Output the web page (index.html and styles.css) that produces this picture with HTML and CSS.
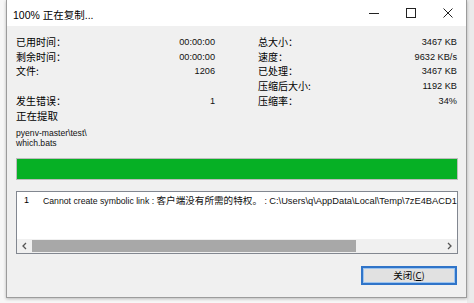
FILE: index.html
```html
<!DOCTYPE html>
<html lang="zh-CN">
<head>
<meta charset="utf-8">
<title>100% 正在复制...</title>
<link rel="stylesheet" href="styles.css">
</head>
<body>
<div class="desktop">
  <div class="window">
    <div class="titlebar">
      <span class="title">100% 正在复制...</span>
      <div class="controls">
        <span class="ctl"><svg width="12" height="12" viewBox="0 0 12 12"><path d="M1 6.5h10" stroke="#222" stroke-width="1"/></svg></span>
        <span class="ctl"><svg width="12" height="12" viewBox="0 0 12 12"><rect x="1.5" y="1.5" width="9" height="9" fill="none" stroke="#222" stroke-width="1"/></svg></span>
        <span class="ctl"><svg width="12" height="12" viewBox="0 0 12 12"><path d="M1.5 1.5l9 9M10.5 1.5l-9 9" stroke="#222" stroke-width="1"/></svg></span>
      </div>
    </div>
    <div class="body">
      <div class="stats">
        <div class="col">
          <div class="row"><span class="lbl">已用时间：</span><span class="val">00:00:00</span></div>
          <div class="row"><span class="lbl">剩余时间：</span><span class="val">00:00:00</span></div>
          <div class="row"><span class="lbl">文件:</span><span class="val">1206</span></div>
          <div class="row"></div>
          <div class="row"><span class="lbl">发生错误：</span><span class="val">1</span></div>
        </div>
        <div class="col">
          <div class="row"><span class="lbl">总大小：</span><span class="val">3467 KB</span></div>
          <div class="row"><span class="lbl">速度：</span><span class="val">9632 KB/s</span></div>
          <div class="row"><span class="lbl">已处理：</span><span class="val">3467 KB</span></div>
          <div class="row"><span class="lbl">压缩后大小:</span><span class="val">1192 KB</span></div>
          <div class="row"><span class="lbl">压缩率：</span><span class="val">34%</span></div>
        </div>
      </div>
      <div class="current">正在提取</div>
      <div class="path">pyenv-master\test\<br>which.bats</div>
      <div class="progress"><div class="fill" style="width:100%"></div></div>
      <div class="log">
        <div class="log-rows">
          <div class="log-row"><span class="num">1</span><span class="msg">Cannot create symbolic link : <span class="cjk">客户端没有所需的特权。</span> : <span class="fpath">C:\Users\q\AppData\Local\Temp\7zE4BACD1</span></span></div>
        </div>
        <div class="hscroll">
          <span class="arr"><svg width="7" height="8" viewBox="0 0 7 8"><path d="M5 1L2 4l3 3" fill="none" stroke="#555" stroke-width="1.3"/></svg></span>
          <div class="track"><div class="thumb"></div></div>
          <span class="arr"><svg width="7" height="8" viewBox="0 0 7 8"><path d="M2 1l3 3-3 3" fill="none" stroke="#555" stroke-width="1.3"/></svg></span>
        </div>
      </div>
      <div class="footer"><button class="btn">关闭(<u>C</u>)</button></div>
    </div>
  </div>
</div>
</body>
</html>
```

FILE: styles.css
```css
* { box-sizing: border-box; }
html, body {
  margin: 0;
  padding: 0;
  width: 474px;
  height: 303px;
  overflow: hidden;
  background: #f7f7f7;
  font-family: "Liberation Sans", "Noto Sans CJK SC", sans-serif;
  font-size: 9px;
  color: #000;
}
.desktop {
  position: relative;
  width: 474px;
  height: 303px;
  background: linear-gradient(to right, #f7f7f7 0, #f7f7f7 467px, #ebebeb 467px);
}
.window {
  margin-left: 6px;
  width: 461px;
  height: 298px;
  border: 1px solid #9c9c9c;
  border-top: none;
  background: #f0f0f0;
  display: flex;
  flex-direction: column;
  box-shadow: 0 1px 3px rgba(0,0,0,0.25);
}
.titlebar {
  height: 26px;
  background: #fff;
  display: flex;
  align-items: center;
  justify-content: space-between;
  padding-left: 6px;
}
.title {
  font-family: "Liberation Sans", "Noto Sans CJK SC", sans-serif;
  font-size: 10.5px;
  padding-top: 2px;
}
.controls {
  display: flex;
  height: 26px;
}
.ctl {
  width: 37px;
  display: flex;
  align-items: center;
  justify-content: center;
}
.controls .ctl:first-child { width: 36px; }
.body {
  flex: 1;
  padding: 8.5px 8px 0 9px;
  display: flex;
  flex-direction: column;
}
.stats {
  display: grid;
  grid-template-columns: 199px 199px;
  column-gap: 43px;
}
.row {
  height: 14.75px;
  display: flex;
  align-items: center;
  justify-content: space-between;
}
.lbl {
  font-family: "Noto Sans CJK SC", sans-serif;
  font-size: 10px;
  line-height: 14px;
}
.val {
  font-size: 9.2px;
  color: #111;
}
.current {
  margin-top: 1px;
  font-family: "Noto Sans CJK SC", sans-serif;
  font-size: 10.5px;
  line-height: 14px;
}
.path {
  margin-top: 4.5px;
  font-size: 8.6px;
  line-height: 10.5px;
  color: #111;
}
.progress {
  margin-top: 9px;
  height: 22px;
  width: 442px;
  border: 1px solid #bcbcbc;
  background: #e6e6e6;
}
.fill {
  height: 100%;
  background: #06b025;
}
.log {
  margin-top: 11px;
  width: 442px;
  height: 63px;
  border: 1px solid #828790;
  background: #fff;
  display: flex;
  flex-direction: column;
  overflow: hidden;
}
.log-rows {
  flex: 1;
  overflow: hidden;
}
.log-row {
  display: flex;
  white-space: nowrap;
  height: 15px;
  align-items: center;
  margin-top: 1px;
}
.num {
  width: 26px;
  padding-left: 7px;
  flex: none;
  font-size: 9px;
}
.msg {
  font-size: 8.7px;
  color: #111;
}
.cjk {
  font-family: "Noto Sans CJK SC", sans-serif;
  font-size: 9.6px;
}
.fpath {
  font-size: 9.3px;
}
.hscroll {
  height: 14px;
  display: flex;
  background: #f0f0f0;
  margin-bottom: 0;
}
.arr {
  width: 15px;
  flex: none;
  display: flex;
  align-items: center;
  justify-content: center;
}
.track {
  flex: 1;
  display: flex;
  align-items: stretch;
  padding: 1px 0;
}
.thumb {
  width: 324px;
  background: #a8a8a8;
}
.footer {
  display: flex;
  justify-content: flex-end;
  margin-top: 12px;
  padding-right: 1px;
}
.btn {
  width: 96px;
  height: 19px;
  border: 2px solid #2f74c9;
  background: #e1e1e1;
  box-shadow: inset 0 0 0 1px #9cc3ee;
  font-family: "Noto Sans CJK SC", sans-serif;
  font-size: 9.5px;
  padding: 0;
  color: #000;
  line-height: 13px;
}
.btn u { text-decoration: underline; }
```
